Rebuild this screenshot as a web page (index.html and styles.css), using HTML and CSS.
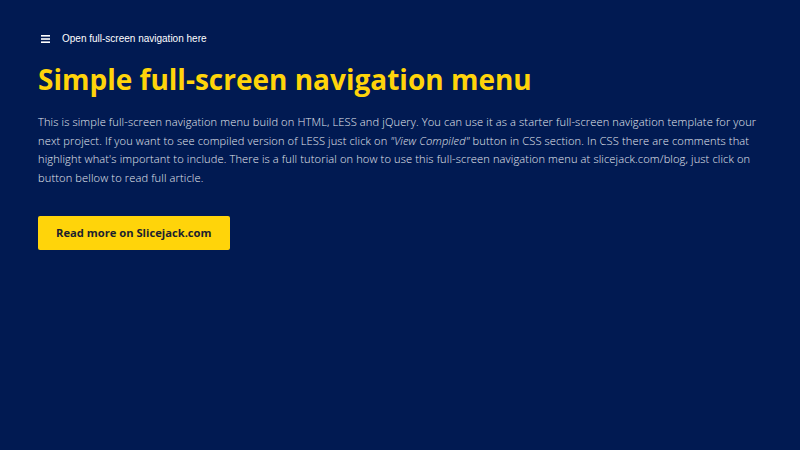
FILE: index.html
```html
<!DOCTYPE html>
<html lang="en">
<head>
    <meta charset="UTF-8">
    <meta name="viewport" content="width=device-width, initial-scale=1.0">
    <title>Full-screen navigation</title>
    <link rel="stylesheet" href="styles.css">
</head>
<body>

    <header class="topbar">
        <a href="#" class="nav-toggle">
            <svg class="nav-icon" width="9" height="8" viewBox="0 0 9 8">
                <rect x="0" y="0" width="9" height="1.6" fill="#ffffff"/>
                <rect x="0" y="3.2" width="9" height="1.6" fill="#ffffff"/>
                <rect x="0" y="6.4" width="9" height="1.6" fill="#ffffff"/>
            </svg>
            <span>Open full-screen navigation here</span>
        </a>
    </header>

    <main class="content">
        <h1>Simple full-screen navigation menu</h1>
        <p>This is simple full-screen navigation menu build on HTML, LESS and jQuery. You can use it as a starter full-screen navigation template for your next project. If you want to see compiled version of LESS just click on <em>"View Compiled"</em> button in CSS section. In CSS there are comments that highlight what's important to include. There is a full tutorial on how to use this full-screen navigation menu at slicejack.com/blog, just click on button bellow to read full article.</p>
        <a href="#" class="btn">Read more on Slicejack.com</a>
    </main>

</body>
</html>
```

FILE: styles.css
```css
:root {
    --navy: #011a52;
    --yellow: #ffd40a;
    --text: #e4e8f0;
    --white: #ffffff;
}

body {
    margin: 0;
    background-color: var(--navy);
    font-family: "Open Sans", sans-serif;
    color: var(--text);
    min-height: 100vh;
}

.topbar {
    padding: 26px 38px 0 41px;
}

.nav-toggle {
    display: inline-flex;
    align-items: center;
    gap: 12px;
    color: var(--white);
    text-decoration: none;
    font-family: "Liberation Sans", Arial, sans-serif;
    font-size: 10px;
    line-height: 14px;
}

.content {
    padding: 0 38px;
}

.content h1 {
    margin: 11px 0 0;
    font-size: 28px;
    font-weight: 700;
    line-height: 40px;
    color: var(--yellow);
}

.content p {
    margin: 14px 0 0;
    font-size: 11.1px;
    font-weight: 300;
    letter-spacing: 0.12px;
    line-height: 18.5px;
    max-width: 730px;
}

.content p em {
    font-style: italic;
}

.btn {
    display: inline-block;
    margin-top: 29px;
    padding: 0 18px;
    height: 34px;
    line-height: 34px;
    background-color: var(--yellow);
    color: #1c1f2e;
    font-size: 11.2px;
    font-weight: 700;
    text-decoration: none;
    border-radius: 2px;
}
```
